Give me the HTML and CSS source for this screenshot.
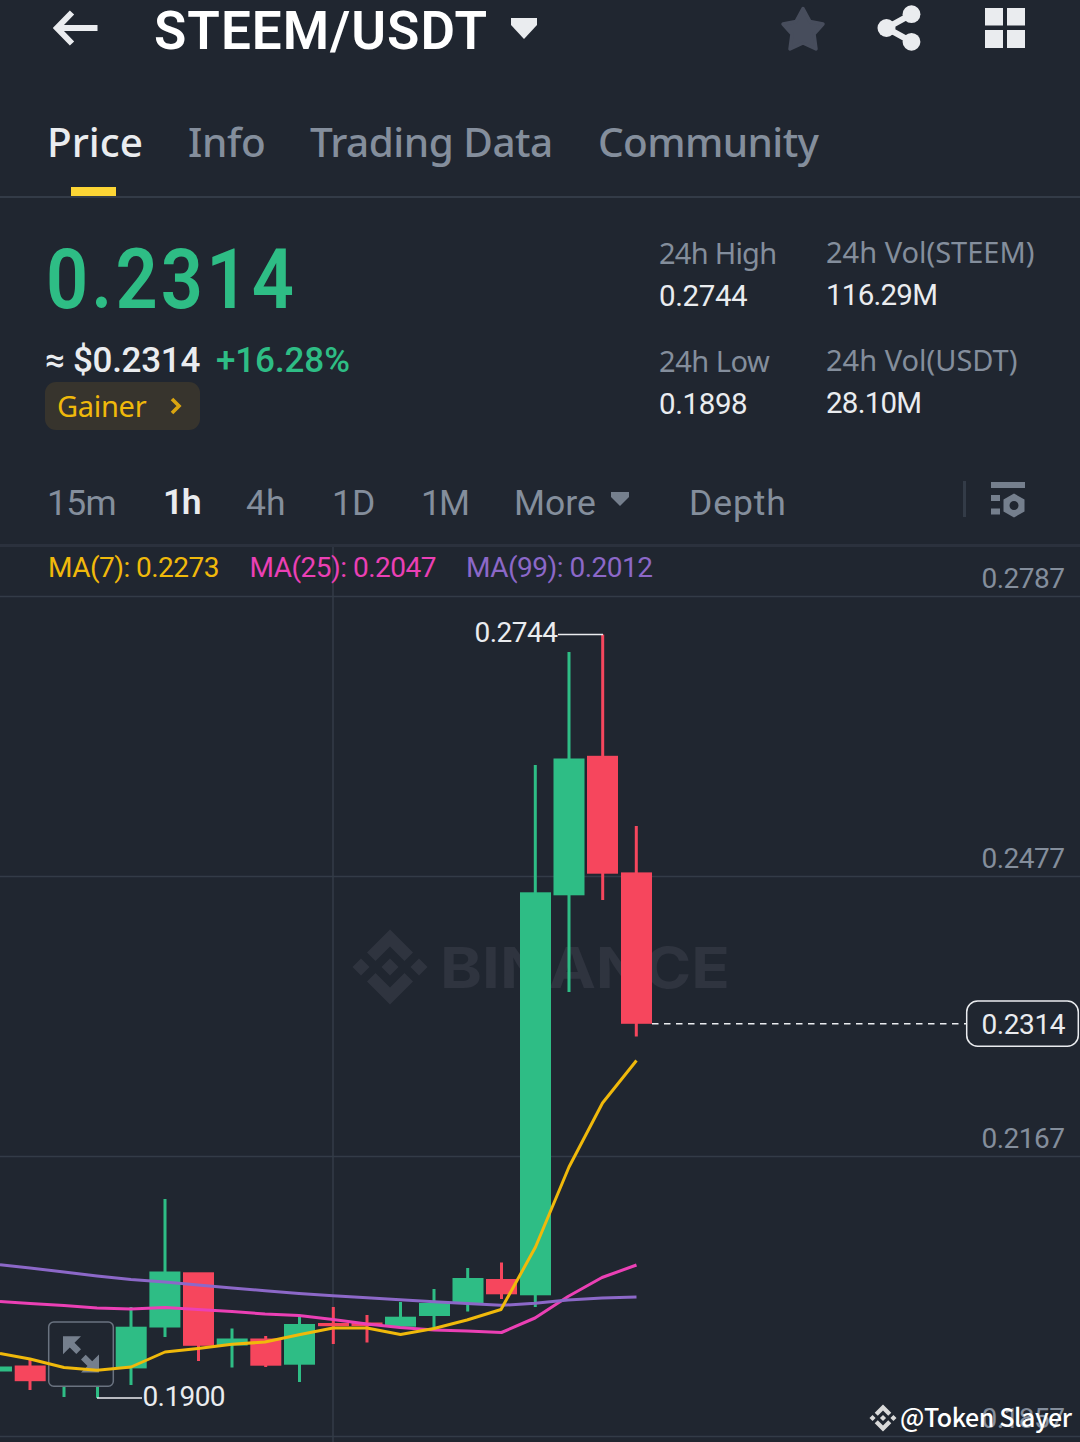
FILE: index.html
```html
<!DOCTYPE html>
<html lang="en">
<head>
    <meta charset="UTF-8">
    <meta name="viewport" content="width=device-width, initial-scale=1.0">
    <title>STEEM/USDT</title>
    <link rel="stylesheet" href="styles.css">
</head>
<body>
    <header class="header">
        <svg class="back" width="44" height="36" viewBox="0 0 44 36">
            <path d="M18.500 2.500L3.500 18L18.500 33.500M4 18H44" fill="none" stroke="#eaecef" stroke-width="6"/>
        </svg>
        <h1 class="pair">STEEM/USDT</h1>
        <svg class="caret" width="28" height="22" viewBox="0 0 28 22">
            <path d="M1 0H27V7L14 21L1 7Z" fill="#eaecef"/>
        </svg>
        <div class="actions">
            <svg width="46" height="46" viewBox="0 0 46 46">
                <path d="M23 2.500L30 15.500L43 18L34 28L36 43L23 37L10 43L12 28L3 18L16 15.500Z" fill="#474d5c" stroke="#474d5c" stroke-width="3.500" stroke-linejoin="round"/>
            </svg>
            <svg width="44" height="46" viewBox="0 0 44 46">
                <path d="M35 9L9.500 23L35 37" fill="none" stroke="#eaecef" stroke-width="6"/>
                <circle cx="34.500" cy="9.200" r="8.900" fill="#eaecef"/>
                <circle cx="9.500" cy="23" r="9" fill="#eaecef"/>
                <circle cx="34.500" cy="36.800" r="8.900" fill="#eaecef"/>
            </svg>
            <svg width="40" height="40" viewBox="0 0 40 40">
                <path d="M0 0H18V17.500H0ZM22 0H40V17.500H22ZM0 22H18V40H0ZM22 22H40V40H22Z" fill="#eaecef"/>
            </svg>
        </div>
    </header>

    <nav class="tabs">
        <a class="tab active tab-price">Price</a>
        <a class="tab tab-info">Info</a>
        <a class="tab tab-trading">Trading Data</a>
        <a class="tab tab-community">Community</a>
    </nav>

    <section class="ticker">
        <div class="last">
            <div class="price">0.2314</div>
            <div class="sub">
                <span class="approx">≈</span>
                <span class="usd">$0.2314</span>
                <span class="change">+16.28%</span>
            </div>
            <div class="tag">
                <span>Gainer</span>
                <svg width="12" height="18" viewBox="0 0 12 18">
                    <path d="M2 2L9 9L2 16" fill="none" stroke="#d9a510" stroke-width="3.600"/>
                </svg>
            </div>
        </div>
        <div class="stats stats-price">
            <div class="label label-high">24h High</div>
            <div class="value">0.2744</div>
            <div class="label label-low">24h Low</div>
            <div class="value">0.1898</div>
        </div>
        <div class="stats stats-vol">
            <div class="label">24h Vol(STEEM)</div>
            <div class="value">116.29M</div>
            <div class="label">24h Vol(USDT)</div>
            <div class="value">28.10M</div>
        </div>
    </section>

    <div class="intervals">
        <span class="i-15m">15m</span>
        <span class="i-1h selected">1h</span>
        <span class="i-4h">4h</span>
        <span class="i-1d">1D</span>
        <span class="i-1mo">1M</span>
        <span class="i-more">More</span>
        <svg class="more-caret" width="18" height="14" viewBox="0 0 18 14">
            <path d="M0 0H18V5L9 14L0 5Z" fill="#757f8d"/>
        </svg>
        <span class="i-depth">Depth</span>
        <div class="divider"></div>
        <svg class="settings" width="36" height="38" viewBox="0 0 36 38">
            <g fill="#757f8d">
                <path d="M1 1H35V7H1ZM1 14H10V20H1ZM1 27.500H10V33.500H1Z"/>
                <path fill-rule="evenodd" d="M24 12.500L34.500 18.500V30.500L24 36.500L13.500 30.500V18.500ZM24 20A4.500 4.500 0 1 0 24 29A4.500 4.500 0 1 0 24 20Z"/>
            </g>
        </svg>
    </div>

    <main class="chart">
        <svg width="1080" height="895" viewBox="0 547 1080 895">
            <defs>
                <path id="binance" d="M0 -37.500L23 -14.500L14.500 -6L0 -20.500L-14.500 -6L-23 -14.500ZM-29 -8.500L-20.500 0L-29 8.500L-37.500 0ZM29 -8.500L37.500 0L29 8.500L20.500 0ZM0 -8.500L8.500 0L0 8.500L-8.500 0ZM0 37.500L23 14.500L14.500 6L0 20.500L-14.500 6L-23 14.500Z"/>
            </defs>

            <!-- grid -->
            <path class="grid" d="M0 596.500H1080M0 876.500H1080M0 1156.500H1080M0 1436.500H1080M333 547V1442"/>

            <!-- watermark -->
            <g class="watermark">
                <use href="#binance" x="390" y="967"/>
                <text x="440" y="987.500" textLength="290" lengthAdjust="spacingAndGlyphs">BINANCE</text>
            </g>

            <!-- candles -->
            <g class="up">
                <path d="M64 1380V1397M97.500 1380V1398M131 1307V1385M165 1199V1337M232 1328.500V1367.500M299.500 1316V1382M400.500 1302V1326M434 1289V1328M467.700 1268V1311.500M535.300 765V1307M569 652V992"/>
                <rect x="-19" y="1366.500" width="31" height="5"/>
                <rect x="115.700" y="1326.700" width="31" height="41.700"/>
                <rect x="149.400" y="1271.500" width="31" height="56"/>
                <rect x="216.700" y="1338.500" width="31" height="7"/>
                <rect x="284" y="1324" width="31" height="40.700"/>
                <rect x="385" y="1316.700" width="31" height="10"/>
                <rect x="419" y="1303" width="31" height="13"/>
                <rect x="452.500" y="1278" width="31" height="25.500"/>
                <rect x="520" y="892.300" width="31" height="403"/>
                <rect x="553.500" y="758.500" width="31" height="136.800"/>
            </g>
            <g class="down">
                <path d="M30 1360V1390M198.500 1340V1361M265.700 1336V1367M333.300 1307V1344M367 1315V1342.500M501.500 1262.500V1299M602.700 634.500V900M636.300 826V1036.500"/>
                <rect x="14.700" y="1365.500" width="31" height="15.700"/>
                <rect x="183" y="1272.300" width="31" height="73.500"/>
                <rect x="250.300" y="1338.500" width="31" height="27.200"/>
                <rect x="318" y="1323" width="31" height="3.200"/>
                <rect x="351.500" y="1322.500" width="31" height="3.500"/>
                <rect x="486" y="1279" width="31" height="15.300"/>
                <rect x="587" y="755.800" width="31" height="117.900"/>
                <rect x="621" y="872.400" width="31" height="151.400"/>
            </g>

            <!-- full screen button -->
            <rect class="expand" x="48.700" y="1322" width="64.600" height="64.300" rx="5"/>
            <path class="expand-arrows" d="M63 1336.200H81L74.500 1342.700L81 1349.200L76.300 1354L69.800 1347.500L63 1354.300ZM99 1372.500H81L87.500 1366L81 1359.500L85.700 1354.700L92.200 1361.200L99 1354.500Z"/>

            <!-- moving averages -->
            <path class="ma ma25" d="M0 1301.500L30 1303.500L64 1305.500L97 1308L131 1309L165 1307.500L198 1309.500L232 1311.500L265 1314L299 1315.500L333 1319.500L367 1324L400 1327.500L434 1330L467 1331L501.500 1332.500L535 1318L568 1296.500L602 1277.500L636.500 1265"/>
            <path class="ma ma99" d="M0 1264.700L30 1268L64 1272L97 1276L131 1279.500L165 1282L198 1285L232 1288L265 1290.700L299 1293.500L333 1295.800L367 1297.700L400 1299.800L434 1301.800L467 1303.500L501 1305.300L535 1303.300L568 1300L602 1298L636.500 1297"/>
            <path class="ma ma7" d="M0 1353.500L30 1359L64 1367.500L97 1370.200L131 1367L165 1352L198 1348.500L232 1344.300L265 1342L299 1334.700L333 1328L367 1328L400.500 1334.500L434 1328.500L467 1320L501 1309.500L535.500 1247L569 1167L602.500 1103L636.500 1060.500"/>

            <!-- high and low marks -->
            <path class="mark" d="M558 634.500H603M97 1398H142"/>
            <text class="mark-text" x="474.500" y="642" textLength="83.500">0.2744</text>
            <text class="mark-text" x="142.500" y="1406" textLength="83">0.1900</text>

            <!-- current price -->
            <path class="current-line" d="M652 1023.700H966"/>
            <rect class="current-box" x="966.700" y="1001" width="111.600" height="45.300" rx="11"/>
            <text class="mark-text" x="981.500" y="1034" textLength="84">0.2314</text>

            <!-- price axis -->
            <g class="axis">
                <text x="981.500" y="588" textLength="83.500">0.2787</text>
                <text x="981.500" y="868" textLength="83.500">0.2477</text>
                <text x="981.500" y="1148" textLength="83.500">0.2167</text>
                <text x="981.500" y="1428" textLength="83.500">0.1857</text>
            </g>

            <!-- legend -->
            <g class="legend">
                <text class="t7" x="48" y="577" textLength="171.500">MA(7): 0.2273</text>
                <text class="t25" x="249.500" y="577" textLength="187">MA(25): 0.2047</text>
                <text class="t99" x="466" y="577" textLength="187">MA(99): 0.2012</text>
            </g>

            <!-- author -->
            <g class="author">
                <use href="#binance" transform="translate(883 1418) scale(0.360)"/>
                <text x="900" y="1427" textLength="172">@Token Slayer</text>
            </g>
        </svg>
    </main>
</body>
</html>
```
FILE: styles.css
```css
* {
    box-sizing: border-box;
}
body {
    margin: 0;
    width: 1080px;
    height: 1442px;
    overflow: hidden;
    background-color: #202630;
    color: #eaecef;
    font-family: Roboto, "Noto Sans", sans-serif;
}
svg {
    display: block;
    flex-shrink: 0;
}

/* header */
.header {
    display: flex;
    align-items: flex-start;
    height: 100px;
    padding: 0 55px 0 53px;
}
.back {
    width: 45px;
    margin-top: 10px;
}
.pair {
    margin: 0 0 0 56px;
    width: 333px;
    font-size: 53px;
    font-weight: 600;
    line-height: 62px;
    letter-spacing: 1px;
    color: #fff;
    white-space: nowrap;
}
.caret {
    margin: 18px 0 0 23px;
}
.actions {
    display: flex;
    margin-left: auto;
}
.actions svg:nth-child(1) {
    margin: 6px 51px 0 0;
}
.actions svg:nth-child(2) {
    margin: 5px 64px 0 0;
}
.actions svg:nth-child(3) {
    margin-top: 8px;
}

/* tabs */
.tabs {
    display: flex;
    height: 98px;
    padding-left: 47px;
    border-bottom: 2px solid #333b47;
    font-family: "Noto Sans", sans-serif;
    font-size: 40.500px;
    font-weight: 500;
    line-height: 84px;
    color: #848e9c;
    white-space: nowrap;
}
.tab.active {
    display: flex;
    flex-direction: column;
    color: #eaecef;
}
.tab.active::after {
    content: "";
    width: 45px;
    height: 9px;
    margin-top: 3px;
    margin-left: 24px;
    background-color: #fcd535;
}
.tab-price {
    width: 141px;
}
.tab-info {
    width: 122px;
    letter-spacing: -0.400px;
}
.tab-trading {
    width: 288px;
    letter-spacing: -0.500px;
}
.tab-community {
    letter-spacing: -0.600px;
}

/* ticker */
.ticker {
    display: flex;
    height: 262px;
}
.last {
    width: 659px;
    padding: 31px 0 0 45px;
}
.price {
    font-size: 84px;
    font-weight: 600;
    line-height: 102px;
    height: 100px;
    padding-left: 1px;
    color: #2ebd85;
    letter-spacing: 3.600px;
    transform: scaleX(0.880);
    transform-origin: 0 0;
}
.sub {
    display: flex;
    height: 53px;
    font-size: 35px;
    font-weight: 500;
    line-height: 63px;
}
.approx {
    width: 28px;
}
.usd {
    width: 143px;
    letter-spacing: -0.300px;
}
.change {
    color: #2ebd85;
    letter-spacing: -0.100px;
}
.tag {
    display: flex;
    align-items: center;
    justify-content: space-between;
    width: 155px;
    height: 48px;
    padding: 0 18px 0 12px;
    border-radius: 11px;
    background-color: #37342d;
    color: #f0b90b;
    font-family: "Noto Sans", sans-serif;
    font-size: 29px;
    letter-spacing: -0.300px;
}
.tag span {
    margin-top: -2px;
}
.stats {
    width: 167px;
    padding-top: 35px;
    white-space: nowrap;
}
.stats-vol {
    width: 240px;
    padding-top: 34px;
}
.label {
    height: 42px;
    line-height: 40px;
    font-family: "Noto Sans", sans-serif;
    font-size: 29px;
    color: #848e9c;
}
.label-high {
    letter-spacing: -0.750px;
}
.label-low {
    letter-spacing: -0.450px;
}
.value {
    height: 42px;
    margin-bottom: 24px;
    line-height: 42px;
    font-size: 29.500px;
    letter-spacing: -0.400px;
}
.stats-vol .value {
    letter-spacing: -0.750px;
}

/* intervals */
.intervals {
    display: flex;
    height: 87px;
    padding-left: 47px;
    border-bottom: 3px solid #2b313d;
    font-size: 35.500px;
    line-height: 86px;
    color: #848e9c;
    white-space: nowrap;
}
.selected {
    color: #eaecef;
    font-weight: 600;
    line-height: 84px;
    letter-spacing: -1.500px;
}
.i-15m {
    width: 116px;
    letter-spacing: -0.700px;
}
.i-1h {
    width: 83px;
}
.i-4h {
    width: 86px;
}
.i-1d {
    width: 89px;
}
.i-1mo {
    width: 93px;
    letter-spacing: -2px;
}
.i-more {
    width: 97px;
}
.more-caret {
    margin-top: 32px;
}
.i-depth {
    margin-left: 60px;
    width: 274px;
    letter-spacing: 0.900px;
}
.divider {
    width: 3px;
    height: 36px;
    margin-top: 21px;
    background-color: #333b47;
}
.settings {
    margin: 21px 0 0 24px;
}

/* chart */
.grid {
    fill: none;
    stroke: #333b47;
    stroke-width: 1.500;
}
.watermark {
    fill: #2f343f;
    font-family: Inter, sans-serif;
    font-size: 57px;
    font-weight: 700;
}
.up {
    fill: #2ebd85;
    stroke: none;
}
.up path {
    stroke: #2ebd85;
    stroke-width: 3;
}
.down {
    fill: #f6465d;
}
.down path {
    stroke: #f6465d;
    stroke-width: 3;
}
.expand {
    fill: #202630;
    stroke: #6a7380;
    stroke-width: 1.500;
}
.expand-arrows {
    fill: #757f8d;
}
.ma {
    fill: none;
    stroke-width: 3;
    stroke-linejoin: round;
}
.ma7 {
    stroke: #f0b90b;
}
.ma25 {
    stroke: #eb40b5;
}
.ma99 {
    stroke: #8c68c8;
}
.mark {
    stroke: #eaecef;
    stroke-width: 1.500;
}
.mark-text {
    fill: #eaecef;
    font-size: 28px;
}
.current-line {
    stroke: #eaecef;
    stroke-width: 1.500;
    stroke-dasharray: 6.500 5.500;
}
.current-box {
    fill: #202630;
    stroke: #eaecef;
    stroke-width: 1.500;
}
.axis {
    fill: #848e9c;
    font-size: 28px;
}
.legend {
    font-size: 28px;
}
.t7 {
    fill: #f0b90b;
}
.t25 {
    fill: #eb40b5;
}
.t99 {
    fill: #8c68c8;
}
.author {
    fill: #fff;
    font-family: "Noto Sans CJK SC", sans-serif;
    font-size: 25px;
    font-weight: 500;
}
.author use {
    fill: #d9d9d9;
}
```
